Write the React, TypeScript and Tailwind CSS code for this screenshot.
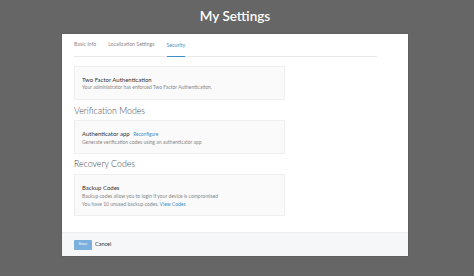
import React from "react";

export default function App() {
  return (
    <div className="h-[276px] w-[474px] bg-[#666666] flex flex-col items-center overflow-hidden pr-[4px]" style={{ fontFamily: "Lato, 'Open Sans', sans-serif" }}>
      <div className="h-[34px] flex items-center justify-center text-white text-[13.5px] font-semibold leading-none pb-[1px]">My Settings</div>
      <div className="w-[346px] h-[222px] bg-white flex flex-col shadow-[0_0_1px_rgba(0,0,0,0.3)]">
        <div className="flex-1 px-3">
          <div className="w-[303px] h-[23px] border-b border-[#e8e8e8] flex items-end gap-[12px] text-[5.2px] text-[#8a8a8a]">
            <div className="h-[15px] flex items-start">Basic Info</div>
            <div className="h-[15px] flex items-start">Localization Settings</div>
            <div className="h-[15px] flex items-start text-[#3d8fc7] border-b-[1.5px] border-[#3d8fc7] -mb-[1px]">Security</div>
          </div>
          <div className="mt-[9px] w-[211px] h-[34px] bg-[#fafafa] border border-[#eeeeee] rounded-[1px] px-[7px] flex flex-col justify-center">
            <div className="text-[6px] text-[#333] leading-[9px]">Two Factor Authentication</div>
            <div className="text-[5px] text-[#888] leading-[7px]">Your administrator has enforced Two Factor Authentication.</div>
          </div>
          <div className="h-[20px] flex items-center text-[8.8px] font-light text-[#444] pt-[2px]">Verification Modes</div>
          <div className="w-[211px] h-[34px] bg-[#fafafa] border border-[#eeeeee] rounded-[1px] px-[7px] flex flex-col justify-center">
            <div className="text-[6px] text-[#333] leading-[9px]">
              Authenticator app <span className="ml-[2px] text-[4.8px] text-[#3d8fc7]">Reconfigure</span>
            </div>
            <div className="text-[5px] text-[#888] leading-[7px]">Generate verification codes using an authenticator app</div>
          </div>
          <div className="h-[20px] flex items-center text-[8.8px] font-light text-[#444]">Recovery Codes</div>
          <div className="w-[211px] h-[42px] bg-[#fafafa] border border-[#eeeeee] rounded-[1px] px-[7px] flex flex-col justify-center">
            <div className="text-[6px] text-[#333] leading-[9px]">Backup Codes</div>
            <div className="text-[5px] text-[#888] leading-[8px]">Backup codes allow you to login if your device is compromised</div>
            <div className="text-[5px] text-[#888] leading-[8px]">
              You have 10 unused backup codes. <span className="text-[#3d8fc7]">View Codes</span>
            </div>
          </div>
        </div>
        <div className="h-[24px] bg-[#f6f7f9] border-t border-[#eeeeee] flex items-center px-[12px] gap-[3px]">
          <div className="w-[18px] h-[10px] rounded-[1px] bg-[#7aafde] text-white text-[4.3px] flex items-center justify-center">Save</div>
          <div className="text-[5.5px] text-[#333]">Cancel</div>
        </div>
      </div>
    </div>
  );
}
